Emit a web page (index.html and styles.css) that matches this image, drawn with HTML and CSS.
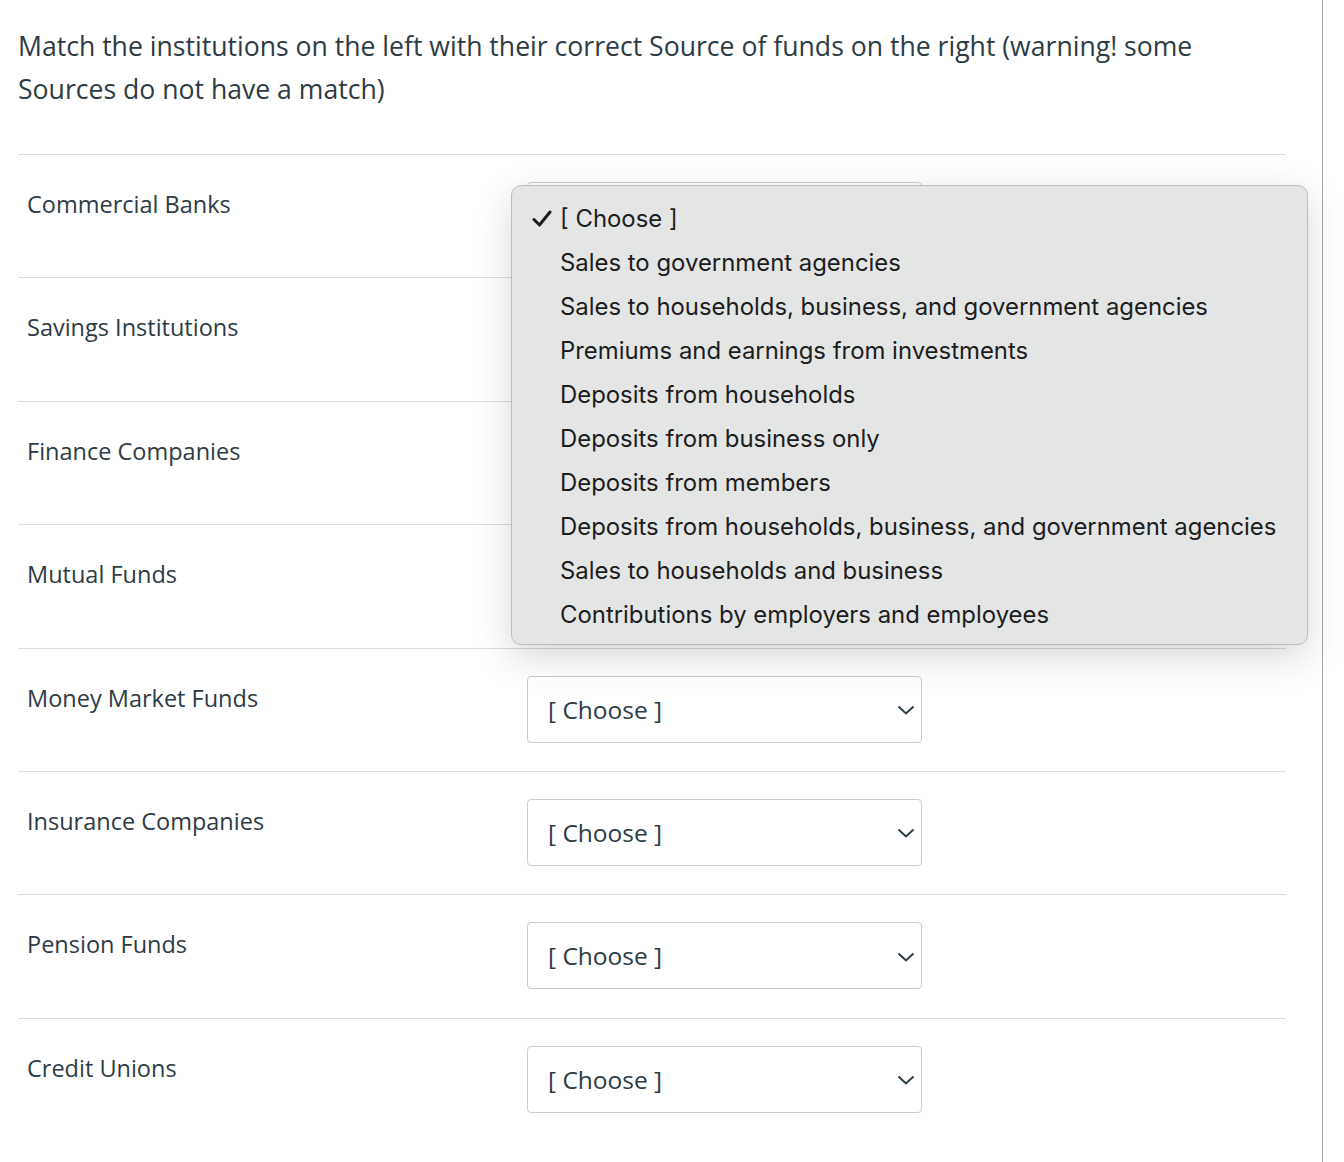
FILE: index.html
```html
<!DOCTYPE html>
<html lang="en">
  <head>
    <meta charset="utf-8" />
    <link rel="stylesheet" href="styles.css">
  </head>
  <body>
    <div class="page">
      <p class="prompt">
        Match the institutions on the left with their correct Source of funds on the right (warning! some Sources do not have a match)
      </p>

      <div class="matches">
        <div class="match-row">
          <div class="label">Commercial Banks</div>
          <div class="select"><span>[ Choose ]</span><svg class="chev" width="18" height="10" viewBox="0 0 18 10"><path d="M1.5 1.5 L9 8.5 L16.5 1.5" fill="none" stroke="#2d3b45" stroke-width="2"/></svg></div>
        </div>
        <div class="match-row">
          <div class="label">Savings Institutions</div>
          <div class="select"><span>[ Choose ]</span><svg class="chev" width="18" height="10" viewBox="0 0 18 10"><path d="M1.5 1.5 L9 8.5 L16.5 1.5" fill="none" stroke="#2d3b45" stroke-width="2"/></svg></div>
        </div>
        <div class="match-row">
          <div class="label">Finance Companies</div>
          <div class="select"><span>[ Choose ]</span><svg class="chev" width="18" height="10" viewBox="0 0 18 10"><path d="M1.5 1.5 L9 8.5 L16.5 1.5" fill="none" stroke="#2d3b45" stroke-width="2"/></svg></div>
        </div>
        <div class="match-row">
          <div class="label">Mutual Funds</div>
          <div class="select"><span>[ Choose ]</span><svg class="chev" width="18" height="10" viewBox="0 0 18 10"><path d="M1.5 1.5 L9 8.5 L16.5 1.5" fill="none" stroke="#2d3b45" stroke-width="2"/></svg></div>
        </div>
        <div class="match-row">
          <div class="label">Money Market Funds</div>
          <div class="select"><span>[ Choose ]</span><svg class="chev" width="18" height="10" viewBox="0 0 18 10"><path d="M1.5 1.5 L9 8.5 L16.5 1.5" fill="none" stroke="#2d3b45" stroke-width="2"/></svg></div>
        </div>
        <div class="match-row">
          <div class="label">Insurance Companies</div>
          <div class="select"><span>[ Choose ]</span><svg class="chev" width="18" height="10" viewBox="0 0 18 10"><path d="M1.5 1.5 L9 8.5 L16.5 1.5" fill="none" stroke="#2d3b45" stroke-width="2"/></svg></div>
        </div>
        <div class="match-row">
          <div class="label">Pension Funds</div>
          <div class="select"><span>[ Choose ]</span><svg class="chev" width="18" height="10" viewBox="0 0 18 10"><path d="M1.5 1.5 L9 8.5 L16.5 1.5" fill="none" stroke="#2d3b45" stroke-width="2"/></svg></div>
        </div>
        <div class="match-row">
          <div class="label">Credit Unions</div>
          <div class="select"><span>[ Choose ]</span><svg class="chev" width="18" height="10" viewBox="0 0 18 10"><path d="M1.5 1.5 L9 8.5 L16.5 1.5" fill="none" stroke="#2d3b45" stroke-width="2"/></svg></div>
        </div>
      </div>

      <!-- open native dropdown of the first select -->
      <ul class="menu">
        <li class="checked"><svg class="check" width="20" height="18" viewBox="0 0 20 18"><path d="M2 9.5 L7.5 15 L18 2" fill="none" stroke="#1d1d1d" stroke-width="3" stroke-linecap="round" stroke-linejoin="round"/></svg>[ Choose ]</li>
        <li>Sales to government agencies</li>
        <li>Sales to households, business, and government agencies</li>
        <li>Premiums and earnings from investments</li>
        <li>Deposits from households</li>
        <li>Deposits from business only</li>
        <li>Deposits from members</li>
        <li>Deposits from households, business, and government agencies</li>
        <li>Sales to households and business</li>
        <li>Contributions by employers and employees</li>
      </ul>
    </div>
  </body>
</html>
```

FILE: styles.css
```css
body {
  margin: 0;
  background: #fff;
  font-family: "Open Sans", Lato, sans-serif;
  color: #2d3b45;
}
.page {
  position: relative;
  width: 1323px;
  min-height: 1162px;
  border-right: 1px solid #a8a8a8;
  box-sizing: border-box;
}
.prompt {
  margin: 0;
  padding: 25px 0 0 18px;
  width: 1240px;
  font-size: 26.6px;
  line-height: 43px;
}
.matches {
  margin: 43px 36px 0 18px;
}
.match-row {
  display: grid;
  grid-template-columns: 509px 395px;
  height: 123.4px;
  border-top: 1px solid #dcdcdc;
  box-sizing: border-box;
}
.label {
  padding: 32px 0 0 9px;
  font-size: 23.5px;
  line-height: 34px;
}
.select {
  margin-top: 27px;
  height: 67px;
  border: 1px solid #c7cdd1;
  border-radius: 4px;
  box-sizing: border-box;
  display: flex;
  align-items: center;
  justify-content: space-between;
  padding: 0 6px 0 20px;
  font-size: 24.5px;
  background: #fff;
}
.chev {
  margin-top: 2px;
}
.menu {
  position: absolute;
  left: 511px;
  top: 185px;
  width: 797px;
  height: 460px;
  margin: 0;
  padding: 11px 0 9px 0;
  box-sizing: border-box;
  list-style: none;
  background: #e4e5e5;
  border: 1px solid #bdbdbd;
  border-radius: 10px;
  box-shadow: 0 12px 36px rgba(0, 0, 0, 0.16);
  font-family: Inter, Roboto, sans-serif;
  font-size: 23.9px;
  color: #1d1d1d;
}
.menu li {
  height: 44px;
  line-height: 44px;
  padding-left: 48px;
  white-space: nowrap;
}
.menu li.checked {
  position: relative;
}
.check {
  position: absolute;
  left: 20px;
  top: 13px;
}
```
